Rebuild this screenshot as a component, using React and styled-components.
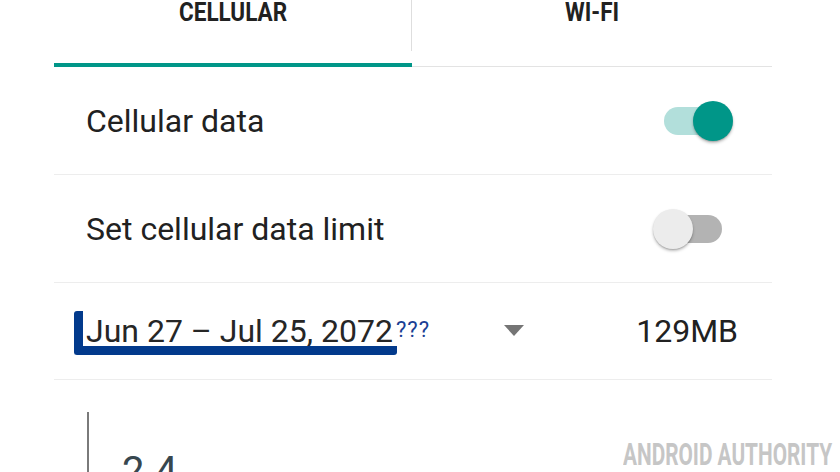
import React from "react";
import styled, { createGlobalStyle } from "styled-components";

const Global = createGlobalStyle`
  html, body { margin: 0; padding: 0; background: #ffffff; }
  body { width: 840px; height: 472px; overflow: hidden; font-family: Roboto, "Noto Sans", sans-serif; }
  * { box-sizing: border-box; }
`;

const Page = styled.div`
  position: relative;
  width: 840px;
  height: 472px;
  overflow: hidden;
  background: #fff;
`;

const Panel = styled.div`
  margin-left: 54px;
  width: 718px;
  display: flex;
  flex-direction: column;
`;

const TabBar = styled.div`
  display: flex;
  border-bottom: 1px solid #e3e3e3;
`;

const Tab = styled.div`
  position: relative;
  flex: 0 0 ${(p) => p.$w}px;
  height: ${(p) => (p.$active ? 67 : 66)}px;
  margin-bottom: ${(p) => (p.$active ? -1 : 0)}px;
  border-bottom: ${(p) => (p.$active ? "4px solid #009688" : "none")};
  display: flex;
  justify-content: center;
  align-items: flex-start;
  font-family: Roboto, sans-serif;
  font-weight: 700;
  font-size: 25px;
  line-height: 1;
  color: #212121;
  ${(p) =>
    p.$divider &&
    `&::after {
      content: "";
      position: absolute;
      right: 0;
      top: 0;
      width: 1px;
      height: 51px;
      background: #dedede;
    }`}
`;

const TabLabel = styled.span`
  display: inline-block;
  transform: scaleX(0.9);
`;

const Row = styled.div`
  height: ${(p) => p.$h}px;
  border-bottom: 1px solid #ededed;
  display: flex;
  align-items: center;
  padding: 0 ${(p) => p.$pr}px 0 32px;
`;

const Label = styled.div`
  flex: 1;
  font-family: Roboto, sans-serif;
  font-size: 32px;
  color: #212121;
  white-space: nowrap;
`;

const SwitchBox = styled.div`
  position: relative;
  width: 80px;
  height: 40px;
`;

const Track = styled.div`
  position: absolute;
  top: 6px;
  left: ${(p) => (p.$on ? 11 : 1)}px;
  width: 68px;
  height: 28px;
  border-radius: 14px;
  background: ${(p) => (p.$on ? "#b2dfdb" : "#b3b3b3")};
`;

const Thumb = styled.div`
  position: absolute;
  top: 0;
  left: ${(p) => (p.$on ? 40 : 0)}px;
  width: 40px;
  height: 40px;
  border-radius: 50%;
  background: ${(p) => (p.$on ? "#009688" : "#ececec")};
  box-shadow: 0 2px 3px rgba(0, 0, 0, 0.25), 0 1px 1px rgba(0, 0, 0, 0.12);
`;

const Switch = ({ on }) => (
  <SwitchBox>
    <Track $on={on} />
    <Thumb $on={on} />
  </SwitchBox>
);

const DateLabel = styled.div`
  position: relative;
  flex: 1;
  font-family: Roboto, sans-serif;
  font-size: 32px;
  color: #262626;
  white-space: nowrap;
`;

const Unknown = styled.span`
  font-family: Roboto, sans-serif;
  font-size: 22px;
  color: #1b3f94;
  letter-spacing: 1px;
  margin-left: 3px;
  vertical-align: 5px;
`;

const Bracket = styled.div`
  position: absolute;
  left: -12px;
  top: -1px;
  width: 323px;
  height: 44px;
  border-left: 9px solid #023a8c;
  border-bottom: 9px solid #023a8c;
  border-radius: 3px;
`;

const Caret = styled.div`
  width: 0;
  height: 0;
  border-left: 10px solid transparent;
  border-right: 10px solid transparent;
  border-top: 11px solid #757575;
  margin-top: -2px;
`;

const Amount = styled.div`
  margin-left: 112px;
  font-family: Roboto, sans-serif;
  font-size: 32px;
  color: #212121;
`;

const Chart = styled.div`
  margin: 32px 0 0 33px;
  height: 80px;
  border-left: 2px solid #7a7a7a;
  padding: 37px 0 0 33px;
`;

const AxisValue = styled.div`
  font-family: Roboto, sans-serif;
  font-size: 40px;
  line-height: 1.17;
  color: #37474f;
`;

const Watermark = styled.div`
  position: absolute;
  left: 623px;
  top: 438px;
  font-family: Roboto, sans-serif;
  font-weight: 700;
  font-size: 32px;
  line-height: 1;
  color: #c6c6c6;
  white-space: nowrap;
  transform: scaleX(0.65);
  transform-origin: left top;
`;

export default function App() {
  return (
    <Page>
      <Global />
      <Panel>
        <TabBar>
          <Tab $w={358} $active $divider>
            <TabLabel>CELLULAR</TabLabel>
          </Tab>
          <Tab $w={360}>
            <TabLabel>WI-FI</TabLabel>
          </Tab>
        </TabBar>
        <Row $h={108} $pr={39}>
          <Label>Cellular data</Label>
          <Switch on />
        </Row>
        <Row $h={108} $pr={39}>
          <Label>Set cellular data limit</Label>
          <Switch on={false} />
        </Row>
        <Row $h={97} $pr={34}>
          <DateLabel>
            <Bracket />
            Jun 27 – Jul 25, 2072
            <Unknown>???</Unknown>
          </DateLabel>
          <Caret />
          <Amount>129MB</Amount>
        </Row>
        <Chart>
          <AxisValue>2.4</AxisValue>
        </Chart>
      </Panel>
      <Watermark>ANDROID AUTHORITY</Watermark>
    </Page>
  );
}
